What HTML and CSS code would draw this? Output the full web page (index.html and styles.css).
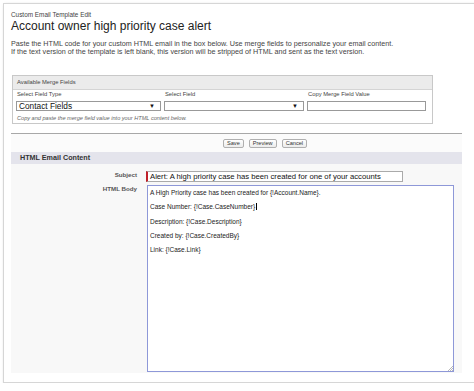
FILE: index.html
```html
<!DOCTYPE html>
<html lang="en">
<head>
    <meta charset="UTF-8">
    <meta name="viewport" content="width=device-width, initial-scale=1.0">
    <title>Custom Email Template Edit</title>
    <link rel="stylesheet" href="styles.css">
</head>
<body>
    <div class="card">
        <div class="crumb">Custom Email Template Edit</div>
        <h1 class="title">Account owner high priority case alert</h1>
        <p class="intro">
            Paste the HTML code for your custom HTML email in the box below. Use merge fields to personalize your email content.<br>
            If the text version of the template is left blank, this version will be stripped of HTML and sent as the text version.
        </p>

        <div class="merge">
            <div class="merge-head">Available Merge Fields</div>
            <div class="merge-body">
                <div class="merge-grid">
                    <div class="field">
                        <label>Select Field Type</label>
                        <div class="select big"><span>Contact Fields</span><span class="arrow">&#9660;</span></div>
                    </div>
                    <div class="field">
                        <label>Select Field</label>
                        <div class="select"><span></span><span class="arrow">&#9660;</span></div>
                    </div>
                    <div class="field">
                        <label>Copy Merge Field Value</label>
                        <div class="textbox"></div>
                    </div>
                </div>
                <div class="merge-help">Copy and paste the merge field value into your HTML content below.</div>
            </div>
        </div>

        <div class="edit">
            <div class="buttons">
                <button>Save</button>
                <button>Preview</button>
                <button>Cancel</button>
            </div>
            <div class="sec-head">HTML Email Content</div>
            <div class="rows">
                <div class="row">
                    <label class="row-label">Subject</label>
                    <div class="subject">Alert: A high priority case has been created for one of your accounts</div>
                </div>
                <div class="row">
                    <label class="row-label">HTML Body</label>
                    <div class="body-box">
                        <div class="line">A High Priority case has been created for {!Account.Name}.</div>
                        <div class="line">Case Number: {!Case.CaseNumber}<span class="caret"></span></div>
                        <div class="line">Description: {!Case.Description}</div>
                        <div class="line">Created by: {!Case.CreatedBy}</div>
                        <div class="line">Link: {!Case.Link}</div>
                        <svg class="grip" width="6" height="6" viewBox="0 0 6 6">
                            <path d="M1 6 L6 1 M3 6 L6 3 M5 6 L6 5" stroke="#999" stroke-width="0.7"/>
                        </svg>
                    </div>
                </div>
            </div>
        </div>
    </div>
</body>
</html>
```

FILE: styles.css
```css
body {
    margin: 0;
    background-color: #fff;
    font-family: "Liberation Sans", Arial, sans-serif;
    color: #333;
}
.card {
    margin: 3px 0 0 3px;
    width: 463px;
    height: 378px;
    border: 1px solid #d6d6d6;
    box-shadow: 2px 2px 3px rgba(0,0,0,0.5);
    padding: 0 0 0 7px;
    box-sizing: content-box;
    background: #fff;
}
.crumb {
    font-size: 6.4px;
    line-height: 8px;
    padding-top: 7px;
    color: #444;
}
.title {
    font-size: 12px;
    font-weight: normal;
    line-height: 14px;
    margin: 0;
    color: #222;
}
.intro {
    font-size: 7.2px;
    line-height: 8px;
    margin: 7px 0 0;
    color: #444;
}
.merge {
    margin: 19px 0 0 1px;
    width: 419px;
    border: 1px solid #c8c8c8;
}
.merge-head {
    height: 13px;
    line-height: 13px;
    background-color: #ebebeb;
    border-bottom: 1px solid #d4d4d4;
    font-size: 5.8px;
    color: #444;
    padding-left: 4px;
}
.merge-body {
    padding: 1px 0 1px 3px;
}
.merge-grid {
    display: grid;
    grid-template-columns: 145px 140px 119px;
    gap: 3px;
}
.field label {
    display: block;
    font-size: 5.8px;
    line-height: 7px;
    padding-left: 1px;
    color: #444;
}
.select, .textbox {
    margin-top: 3px;
    height: 10px;
    box-sizing: border-box;
    border: 1px solid #999;
    background: #fff;
    display: flex;
    align-items: center;
    justify-content: space-between;
    padding: 0 5px 0 2px;
}
.select.big {
    font-size: 8.3px;
    color: #111;
}
.arrow {
    font-size: 6px;
    line-height: 6px;
    color: #111;
}
.merge-help {
    margin-top: 4px;
    font-size: 5.6px;
    line-height: 7px;
    font-style: italic;
    color: #666;
    padding-left: 1px;
}
.edit {
    margin-top: 9px;
    width: 451px;
    height: 239px;
    border-top: 1px solid #a8a8a8;
    background-color: #f8f8f8;
}
.buttons {
    display: flex;
    gap: 5px;
    padding: 5px 0 4px 212px;
    background-color: #fbfbfb;
}
.buttons button {
    height: 9px;
    padding: 0 3px;
    font-family: "Liberation Sans", Arial, sans-serif;
    font-size: 5.6px;
    line-height: 7px;
    color: #333;
    background: linear-gradient(#ffffff, #ececec);
    border: 1px solid #b0b0b0;
    border-radius: 2px;
}
.sec-head {
    height: 12px;
    line-height: 12px;
    background-color: #e4e4ec;
    font-size: 7.2px;
    font-weight: bold;
    color: #333;
    padding-left: 9px;
}
.rows {
    padding-top: 7px;
    display: flex;
    flex-direction: column;
    gap: 3px;
}
.row {
    display: flex;
    align-items: flex-start;
}
.row-label {
    width: 126px;
    padding-right: 10px;
    text-align: right;
    font-size: 6.2px;
    line-height: 7px;
    font-weight: bold;
    color: #555;
}
.row:first-child .row-label {
    margin-right: -1px;
}
.subject {
    width: 257px;
    height: 11px;
    box-sizing: border-box;
    border: 1px solid #aaa;
    border-left: 2px solid #c0202a;
    background: #fff;
    font-size: 7.7px;
    line-height: 9px;
    padding-left: 2px;
    color: #111;
    white-space: nowrap;
}
.body-box {
    position: relative;
    width: 307px;
    height: 187px;
    box-sizing: border-box;
    border: 1px solid #8e98d8;
    background: #fff;
    padding: 3px 0 0 2px;
    font-size: 6.5px;
    line-height: 7.125px;
    color: #222;
}
.line {
    margin-bottom: 7.125px;
}
.caret {
    display: inline-block;
    width: 1px;
    height: 7px;
    background: #000;
    vertical-align: -1px;
    margin-left: 1px;
}
.grip {
    position: absolute;
    right: 0;
    bottom: 0;
}
```
